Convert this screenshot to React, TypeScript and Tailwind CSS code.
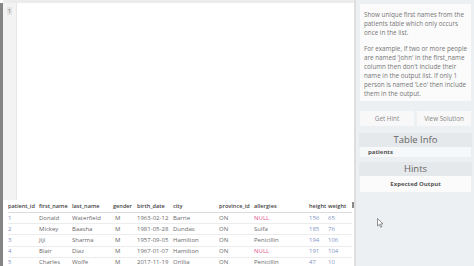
import React from "react";

const cols = [
  { k: "patient_id", w: 31 },
  { k: "first_name", w: 33 },
  { k: "last_name", w: 41 },
  { k: "gender", w: 24 },
  { k: "birth_date", w: 36 },
  { k: "city", w: 46 },
  { k: "province_id", w: 35 },
  { k: "allergies", w: 55 },
  { k: "height", w: 19 },
  { k: "weight", w: 24 },
];

const rows = [
  ["1", "Donald", "Waterfield", "M", "1963-02-12", "Barrie", "ON", "NULL", "156", "65"],
  ["2", "Mickey", "Baasha", "M", "1981-05-28", "Dundas", "ON", "Sulfa", "185", "76"],
  ["3", "Jiji", "Sharma", "M", "1957-09-05", "Hamilton", "ON", "Penicillin", "194", "106"],
  ["4", "Blair", "Diaz", "M", "1967-01-07", "Hamilton", "ON", "NULL", "191", "104"],
  ["5", "Charles", "Wolfe", "M", "2017-11-19", "Orillia", "ON", "Penicillin", "47", "10"],
];

function cellColor(ci: number, v: string) {
  if (v === "NULL") return "text-[#e0568a]";
  if (ci === 0 || ci === 8 || ci === 9) return "text-[#7f93c4]";
  return "text-[#6a6a6a]";
}

export default function App() {
  return (
    <div
      className="w-[474px] h-[266px] flex overflow-hidden bg-white"
      style={{ fontFamily: '"Open Sans", "Noto Sans", sans-serif' }}
    >
      <div className="w-[3px] h-full bg-[#858585] shrink-0 mt-[3px]" />
      <div className="w-[351px] h-full flex flex-col shrink-0">
        <div className="h-[200px] flex flex-col shrink-0">
          <div className="h-[3px] bg-[#ececec]" />
          <div className="flex flex-1">
            <div className="w-[14px] bg-[#f3f3f3] border-r border-[#e6e6e6] flex justify-center pt-[4px]">
              <span className="text-[6px] leading-[8px] text-[#777] bg-[#e4e4e4] px-[1px] h-[8px]">1</span>
            </div>
            <div className="flex-1 bg-white" />
          </div>
        </div>
        <div className="flex-1 flex bg-white">
          <div className="flex-1 pl-[5px] text-[6px]">
            <div className="flex h-[13px] pt-[1px] items-center border-b border-[#dcdcdc] font-semibold text-[#444] text-[5.6px]">
              {cols.map((c) => (
                <div key={c.k} style={{ width: c.w }} className="shrink-0 whitespace-nowrap">
                  {c.k}
                </div>
              ))}
            </div>
            {rows.map((r, ri) => (
              <div key={ri} className="flex h-[11.2px] items-center border-b border-[#ececec]">
                {r.map((v, ci) => (
                  <div
                    key={ci}
                    style={{ width: cols[ci].w }}
                    className={`shrink-0 whitespace-nowrap ${cellColor(ci, v)} ${ci === 3 ? "pl-[2px]" : ""}`}
                  >
                    {v}
                  </div>
                ))}
              </div>
            ))}
          </div>
          <div className="w-[4px] flex flex-col pt-[2px]">
            <div className="h-[6px] w-[3px] bg-[#8a8a8a]" />
          </div>
        </div>
      </div>
      <div className="w-[2px] h-full bg-[#dedede] shrink-0" />
      <div className="flex-1 h-full bg-[#edf0f2] flex flex-col pt-[4px] px-[3px] relative">
        <div className="mx-[1px] bg-[#fbfbfb] px-[4px] pt-[6px] pb-[3px] text-[6.3px] leading-[9px] text-[#777] whitespace-nowrap">
          <p>Show unique first names from the</p>
          <p>patients table which only occurs</p>
          <p>once in the list.</p>
          <p className="mt-[7px]">For example, if two or more people</p>
          <p>are named 'John' in the first_name</p>
          <p>column then don't include their</p>
          <p>name in the output list. If only 1</p>
          <p>person is named 'Leo' then include</p>
          <p>them in the output.</p>
        </div>
        <div className="mx-[1px] mt-[10px] flex gap-[3px]">
          <div className="flex-1 h-[15px] bg-[#f8f8f8] flex items-center justify-center text-[6.3px] text-[#888]">
            Get Hint
          </div>
          <div className="flex-1 h-[15px] bg-[#f8f8f8] flex items-center justify-center text-[6.3px] text-[#888]">
            View Solution
          </div>
        </div>
        <div className="mt-[7px] h-[14px] bg-[#e6e9ec] flex items-center justify-center text-[9.5px] text-[#666]">
          Table Info
        </div>
        <div className="mx-[1px] h-[10px] bg-[#f7f8f9] flex items-center pl-[8px] text-[6px] font-bold text-[#555]">
          patients
        </div>
        <div className="mt-[5px] h-[14px] bg-[#e6e9ec] flex items-center justify-center text-[9.5px] text-[#666]">
          Hints
        </div>
        <div className="mx-[1px] h-[16px] bg-[#fbfbfb] flex items-center justify-center text-[6px] font-bold text-[#555]">
          Expected Output
        </div>
        <svg
          className="absolute left-[21px] top-[218px]"
          width="7"
          height="10"
          viewBox="0 0 7 10"
        >
          <path d="M0.5 0.5 L0.5 8 L2.3 6.3 L3.6 9.3 L4.8 8.8 L3.6 5.9 L6 5.9 Z" fill="#fff" stroke="#666" strokeWidth="0.7" />
        </svg>
      </div>
    </div>
  );
}
